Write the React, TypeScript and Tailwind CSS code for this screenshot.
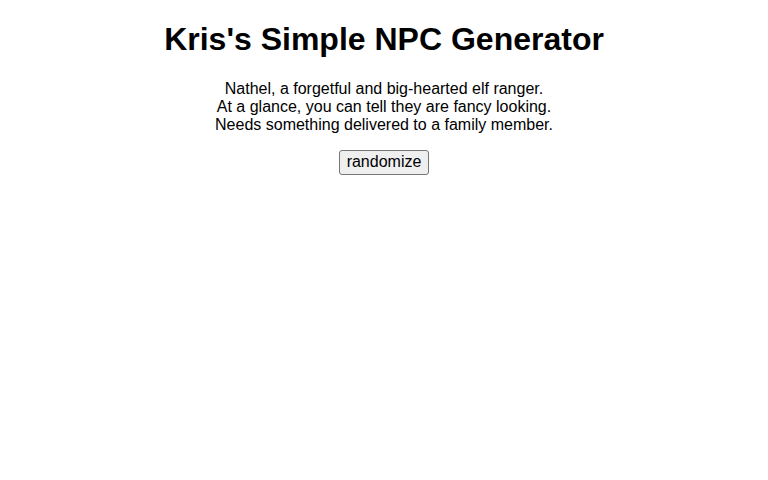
import React, { useState } from 'react';

const names = ['Nathel', 'Borin', 'Elsa', 'Tamsin', 'Grik'];
const traits = ['forgetful and big-hearted', 'grumpy but loyal', 'cheerful and nosy'];
const races = ['elf ranger', 'dwarf smith', 'halfling bard'];
const looks = ['fancy looking', 'weathered', 'nervous'];
const wants = ['Needs something delivered to a family member.', 'Is looking for a lost pet.', 'Wants revenge on a rival merchant.'];

const pick = (arr: string[]) => arr[Math.floor(Math.random() * arr.length)];

const App = () => {
    const [npc, setNpc] = useState({
        name: 'Nathel',
        trait: 'forgetful and big-hearted',
        race: 'elf ranger',
        look: 'fancy looking',
        want: 'Needs something delivered to a family member.'
    });

    const randomize = () => {
        setNpc({
            name: pick(names),
            trait: pick(traits),
            race: pick(races),
            look: pick(looks),
            want: pick(wants)
        });
    };

    return (
        <div className="min-h-screen bg-white text-black text-center font-['Liberation_Sans',Arial,sans-serif] text-base leading-[18px]">
            <h1 className="text-[32px] font-bold leading-[37px] pt-[21px] mb-[22px]">
                Kris's Simple NPC Generator
            </h1>
            <p className="mb-4">
                {npc.name}, a {npc.trait} {npc.race}.
                <br />
                At a glance, you can tell they are {npc.look}.
                <br />
                {npc.want}
            </p>
            <div>
                <button
                    type="button"
                    onClick={randomize}
                    className="bg-[#efefef] border border-[#767676] rounded-[3px] px-[7px] pt-[2px] pb-[3px] leading-[18px] text-base hover:bg-[#e5e5e5]"
                >
                    randomize
                </button>
            </div>
        </div>
    );
};

export default App;
